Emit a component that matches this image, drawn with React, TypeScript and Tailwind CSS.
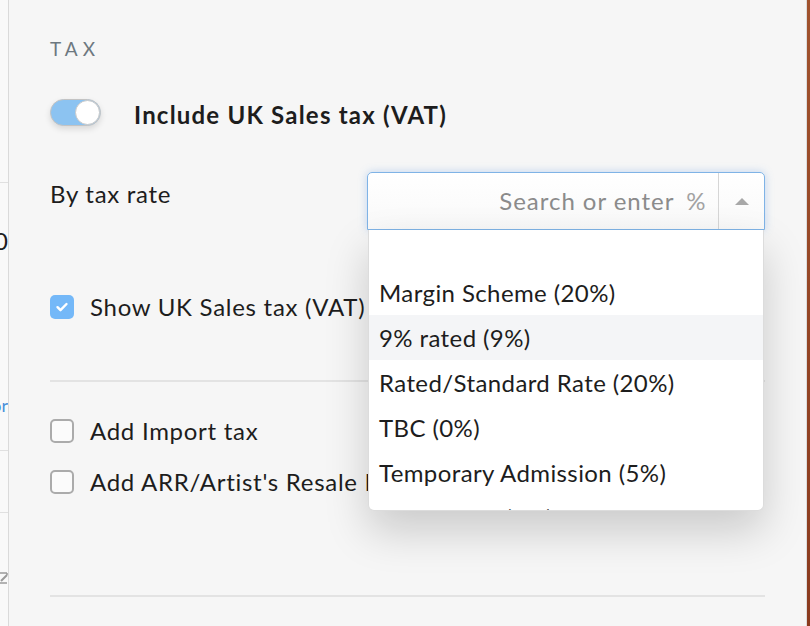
import React from 'react';

const font = { fontFamily: 'Lato, "Open Sans", sans-serif' };

const rates = [
  '',
  'Margin Scheme (20%)',
  '9% rated (9%)',
  'Rated/Standard Rate (20%)',
  'TBC (0%)',
  'Temporary Admission (5%)',
  'Zero Rated (0%)',
];

const Checkbox: React.FC<{ checked?: boolean }> = ({ checked }) =>
  checked ? (
    <span className="w-[24px] h-[24px] rounded-[5px] bg-[#74b8f8] flex items-center justify-center shrink-0">
      <svg width="14" height="14" viewBox="0 0 14 14" fill="none">
        <path d="M2.5 7.2l3 3 6-6.2" stroke="#fff" strokeWidth="2.4" strokeLinecap="round" strokeLinejoin="round" />
      </svg>
    </span>
  ) : (
    <span className="w-[24px] h-[24px] rounded-[5px] border-2 border-[#ababab] bg-[#fbfbfb] shrink-0" />
  );

const App: React.FC = () => {
  return (
    <div className="w-[810px] h-[626px] flex overflow-hidden bg-[#f6f6f6] text-[#1d1d1d]" style={font}>
      {/* page behind the panel */}
      <div className="w-[8px] shrink-0 bg-[#f9f9f9] flex flex-col overflow-hidden">
        <div className="h-[182px] shrink-0" />
        <div className="h-px bg-[#e0e0e0] shrink-0" />
        <div className="h-[45px] shrink-0" />
        <div className="h-[26px] flex justify-end whitespace-nowrap text-[24px] leading-[26px] text-[#1d1d1d] shrink-0">10</div>
        <div className="h-[140px] shrink-0" />
        <div className="h-[22px] flex justify-end whitespace-nowrap text-[18px] leading-[22px] text-[#4a90d9] shrink-0">for</div>
        <div className="h-[34px] shrink-0" />
        <div className="h-px bg-[#e0e0e0] shrink-0" />
        <div className="h-[61px] shrink-0" />
        <div className="h-px bg-[#e0e0e0] shrink-0" />
        <div className="h-[58px] shrink-0" />
        <div className="h-[14px] flex justify-end shrink-0">
          <svg width="8" height="14" viewBox="0 0 8 14">
            <path d="M0 2h7M0 12h7M7 2v2" stroke="#9a9a9a" strokeWidth="1.5" fill="none" />
            <path d="M1 10l6-6" stroke="#9a9a9a" strokeWidth="2" />
          </svg>
        </div>
      </div>

      {/* tax panel */}
      <div className="flex-1 border-l border-[#dadada] bg-[#f6f6f6] pl-[41px] pr-[41px] pt-[38px] relative tracking-[0.045em]">
        <div className="h-[22px] leading-[22px] text-[19px] tracking-[0.26em] text-[#6d7880]">TAX</div>

        <div className="mt-[39px] flex items-center h-[27px]">
          <span className="w-[51px] h-[27px] rounded-full bg-[#8cc3f1] border border-[#c3c3c3] flex items-center justify-end shadow-[0_3px_6px_rgba(0,0,0,0.12)]">
            <span className="w-[25px] h-[25px] rounded-full bg-white border border-[#c9c9c9]" />
          </span>
          <span className="ml-[33px] text-[24px] font-bold leading-[27px] tracking-[0.05em] pt-[4px]">Include UK Sales tax (VAT)</span>
        </div>

        <div className="mt-[46px] flex items-start justify-between h-[58px]">
          <span className="text-[24px] leading-[44px]">By tax rate</span>
          <div className="relative w-[398px] h-[58px] tracking-[0.025em]">
            <div className="h-full flex rounded-t-[5px] border border-[#7fb3e6] bg-gradient-to-b from-white to-[#f9f9f9] shadow-[0_0_8px_rgba(90,150,225,0.35)]">
              <div className="flex-1 flex items-center justify-end pr-[12px] text-[24px] text-[#8b8b8b]">
                <span className="tracking-[0.04em]">Search or enter</span>
                <span className="ml-[12px] text-[#a2a2a2]">%</span>
              </div>
              <div className="w-[46px] border-l border-[#d6d6d6] flex items-center justify-center">
                <svg width="14" height="8" viewBox="0 0 14 8">
                  <path d="M0 8L7 1l7 7z" fill="#a8a8a8" />
                </svg>
              </div>
            </div>

            {/* open menu */}
            <div className="absolute left-px right-px top-[58px] h-[281px] overflow-hidden bg-white border-x border-b border-[#dcdcdc] rounded-b-[6px] shadow-[0_20px_44px_rgba(0,0,0,0.18)] z-10">
              <div className="-mt-[5px]">
                {rates.map((r, i) => (
                  <div
                    key={i}
                    className={`h-[45px] px-[10px] flex items-center text-[24px] whitespace-nowrap ${i === 2 ? 'bg-[#f4f5f7]' : ''}`}
                  >
                    {r}
                  </div>
                ))}
              </div>
            </div>
          </div>
        </div>

        <div className="mt-[65px] flex items-center h-[24px] whitespace-nowrap">
          <Checkbox checked />
          <span className="ml-[16px] text-[24px]">Show UK Sales tax (VAT)</span>
        </div>

        <div className="mt-[61px] h-[2px] bg-[#e3e3e3]" />

        <div className="mt-[37px] flex items-center h-[24px] whitespace-nowrap">
          <Checkbox />
          <span className="ml-[16px] text-[24px]">Add Import tax</span>
        </div>

        <div className="mt-[27px] flex items-center h-[24px] whitespace-nowrap">
          <Checkbox />
          <span className="ml-[16px] text-[24px]">Add ARR/Artist's Resale Right</span>
        </div>

        <div className="mt-[101px] h-[2px] bg-[#e3e3e3]" />
      </div>

      {/* edge of the window */}
      <div className="w-px shrink-0 bg-[#dcdcdc]" />
      <div className="w-[3px] shrink-0 bg-gradient-to-b from-[#a0522d] to-[#8a3a1e]" />
    </div>
  );
};

export default App;
